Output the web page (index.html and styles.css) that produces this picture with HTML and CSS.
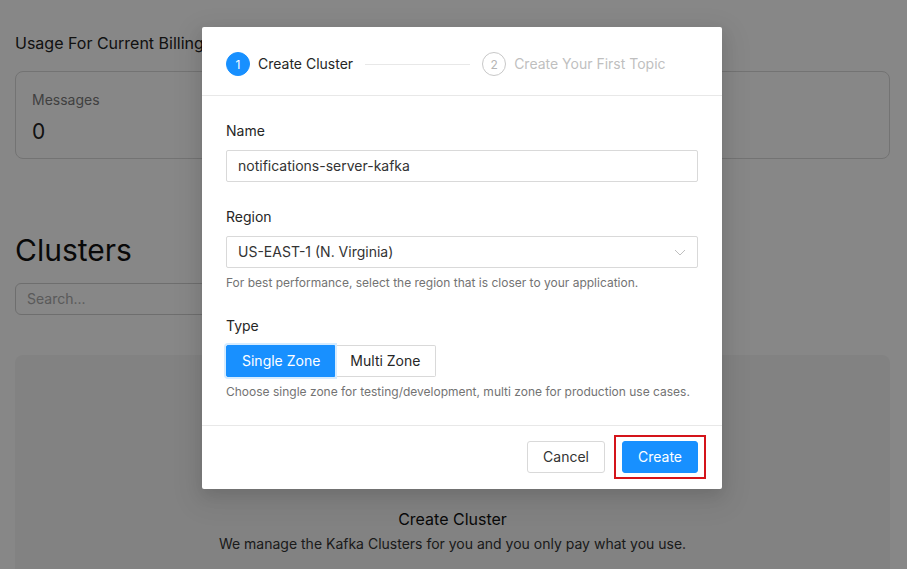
FILE: index.html
```html
<!DOCTYPE html>
<html>
<head>
<meta charset="utf-8">
<link rel="stylesheet" href="styles.css">
</head>
<body>
<main class="page">
  <h2 class="usage-title">Usage For Current Billing Period</h2>
  <section class="usage-card">
    <div class="stat">
      <div class="stat-label">Messages</div>
      <div class="stat-value">0</div>
    </div>
  </section>
  <h1 class="clusters-title">Clusters</h1>
  <div class="search">Search...</div>
  <section class="empty-card">
    <div class="empty-title">Create Cluster</div>
    <div class="empty-sub">We manage the Kafka Clusters for you and you only pay what you use.</div>
  </section>
</main>
<div class="mask"></div>
<div class="modal">
  <div class="modal-header">
    <div class="step active"><span class="step-icon">1</span><span class="step-title">Create Cluster</span></div>
    <div class="step-line"></div>
    <div class="step"><span class="step-icon">2</span><span class="step-title">Create Your First Topic</span></div>
  </div>
  <div class="modal-body">
    <div class="field">
      <label class="label">Name</label>
      <div class="input">notifications-server-kafka</div>
    </div>
    <div class="field">
      <label class="label">Region</label>
      <div class="input select">US-EAST-1 (N. Virginia)
        <svg class="chev" width="12" height="12" viewBox="0 0 12 12"><path d="M1 4 L6 9 L11 4" fill="none" stroke="#bfbfbf" stroke-width="1"/></svg>
      </div>
      <div class="help">For best performance, select the region that is closer to your application.</div>
    </div>
    <div class="field">
      <label class="label">Type</label>
      <div class="seg">
        <span class="seg-btn on">Single Zone</span><span class="seg-btn">Multi Zone</span>
      </div>
      <div class="help">Choose single zone for testing/development, multi zone for production use cases.</div>
    </div>
  </div>
  <div class="modal-footer">
    <button class="btn">Cancel</button>
    <span class="highlight"><button class="btn primary">Create</button></span>
  </div>
</div>
</body>
</html>
```

FILE: styles.css
```css
* { box-sizing: border-box; }
html, body { margin: 0; padding: 0; }
body {
  width: 907px; height: 569px; overflow: hidden;
  font-family: Inter, "Noto Sans", sans-serif;
  background: #fff;
  color: #1f1f1f;
  position: relative;
}
.page { padding: 32px 17px 0 15px; }
.usage-title { font-size: 16px; font-weight: 400; margin: 0 0 17px; line-height: 22px; color: #222; }
.usage-card {
  height: 88px; border: 1px solid #d9d9d9; border-radius: 8px;
  padding: 18px 16px;
}
.stat-label { font-size: 14px; color: #7a7a7a; line-height: 20px; }
.stat-value { font-size: 21px; line-height: 28px; margin-top: 8px; color: #222; }
.clusters-title { font-size: 30px; font-weight: 400; margin: 71px 0 13px; line-height: 40px; color: #111; }
.search {
  width: 420px; height: 32px; border: 1px solid #d0d0d0; border-radius: 6px;
  padding: 5px 11px; font-size: 14px; color: #aaa; line-height: 20px;
}
.empty-card {
  margin-top: 40px; height: 230px; background: #f6f6f6; border-radius: 8px;
  display: flex; flex-direction: column; align-items: center; padding-top: 153px;
}
.empty-title { font-size: 16px; line-height: 22px; color: #111; }
.empty-sub { font-size: 14px; line-height: 22px; margin-top: 3px; color: #333; }
.mask { position: absolute; inset: 0; background: rgba(0,0,0,0.47); }
.modal {
  position: absolute; left: 202px; top: 27px; width: 520px; height: 462px;
  background: #fff; border-radius: 2px;
  box-shadow: 0 6px 16px rgba(0,0,0,0.1), 0 9px 28px 8px rgba(0,0,0,0.06);
  display: flex; flex-direction: column;
}
.modal-header {
  height: 69px; border-bottom: 1px solid #e8e8e8;
  display: flex; align-items: center; padding: 7px 24px 0;
}
.step { display: flex; align-items: center; }
.step-icon {
  width: 24px; height: 24px; border-radius: 50%; border: 1px solid #c8c8c8;
  display: flex; align-items: center; justify-content: center;
  font-size: 12px; color: #b5b5b5; margin-right: 8px;
}
.step.active .step-icon { background: #1890ff; border-color: #1890ff; color: #fff; }
.step-title { font-size: 14px; color: #bfbfbf; line-height: 22px; }
.step.active .step-title { color: #262626; }
.step-line { width: 105px; height: 1px; background: #e8e8e8; margin: 0 12px 0 12px; }
.modal-body { padding: 24px 24px 0; flex: 1; }
.field { margin-bottom: 24px; }
.label { display: block; font-size: 14px; line-height: 22px; color: #262626; margin-bottom: 8px; }
.input {
  height: 32px; border: 1px solid #d9d9d9; border-radius: 2px;
  padding: 4px 11px; font-size: 14px; line-height: 22px; color: #333;
  position: relative;
}
.chev { position: absolute; right: 11px; top: 9px; }
.help { font-size: 12px; line-height: 18px; color: #737373; margin-top: 6px; }
.field:nth-child(2) { margin-bottom: 23px; }
.seg { display: flex; }
.seg-btn {
  height: 32px; padding: 0 15px; display: flex; align-items: center;
  font-size: 14px; border: 1px solid #d9d9d9; color: #262626; background: #fff;
}
.seg-btn:first-child { border-radius: 2px 0 0 2px; padding: 0 14px 0 15px; }
.seg-btn:last-child { border-left: 0; border-radius: 0 2px 2px 0; }
.seg-btn.on {
  background: #1890ff; border-color: #1890ff; color: #fff;
  box-shadow: 0 0 0 2px #d6ecff; position: relative;
}
.modal-footer {
  height: 65px; border-top: 1px solid #e8e8e8;
  display: flex; align-items: center; justify-content: flex-end; padding: 0 24px 1px; gap: 17px;
}
.btn {
  height: 32px; padding: 0 15px; font-family: inherit; font-size: 14px;
  border: 1px solid #d9d9d9; background: #fff; color: #333; border-radius: 3px;
}
.btn.primary { background: #1890ff; border-color: #1890ff; color: #fff; width: 76px; }
.highlight { position: relative; display: flex; }
.highlight::after {
  content: ""; position: absolute; left: -8px; right: -8px; top: -6px; bottom: -6px;
  border: 2px solid #d4141a; pointer-events: none;
}
```
